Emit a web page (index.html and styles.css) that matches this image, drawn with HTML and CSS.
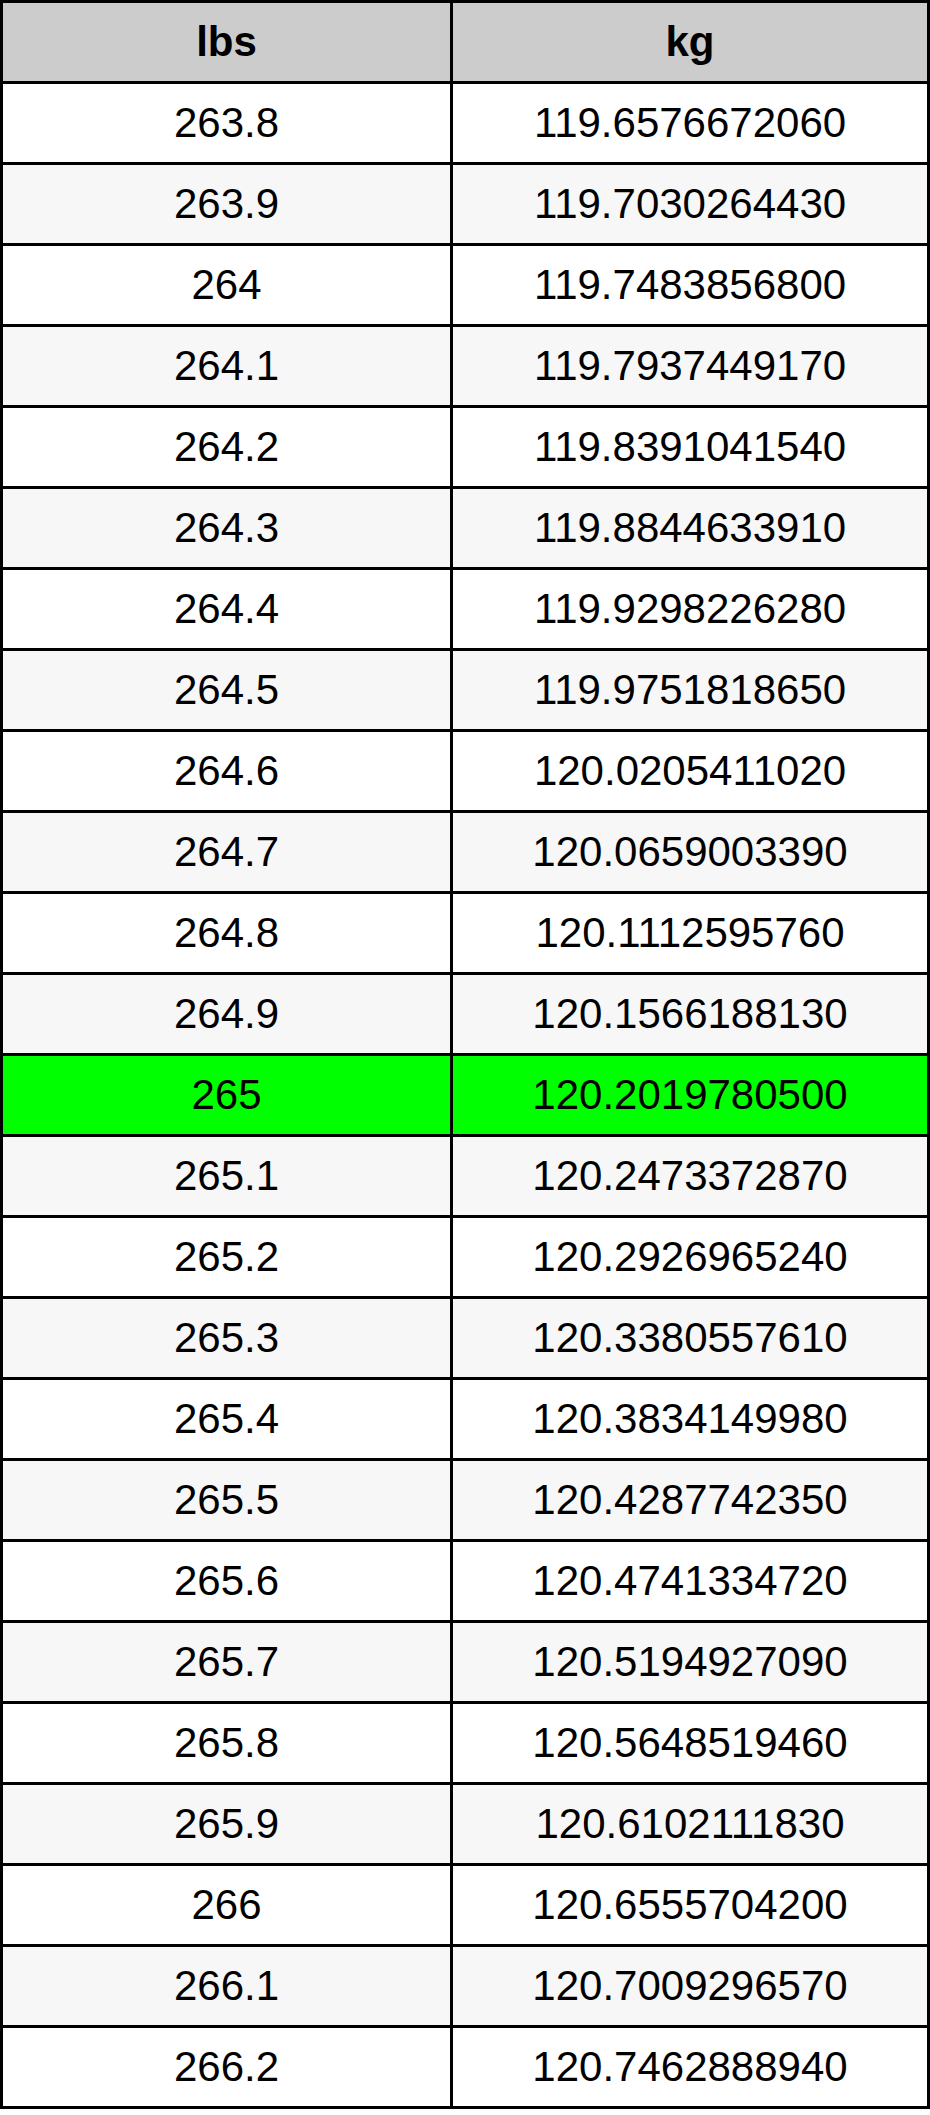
FILE: index.html
```html
<!DOCTYPE html>
<html>
<head>
<meta charset="utf-8">
<title>lbs to kg</title>
<link rel="stylesheet" href="styles.css">
</head>
<body>
<table class="conv">
<thead>
<tr><th class="c1">lbs</th><th class="c2">kg</th></tr>
</thead>
<tbody>
<tr><td>263.8</td><td>119.6576672060</td></tr>
<tr class="alt"><td>263.9</td><td>119.7030264430</td></tr>
<tr><td>264</td><td>119.7483856800</td></tr>
<tr class="alt"><td>264.1</td><td>119.7937449170</td></tr>
<tr><td>264.2</td><td>119.8391041540</td></tr>
<tr class="alt"><td>264.3</td><td>119.8844633910</td></tr>
<tr><td>264.4</td><td>119.9298226280</td></tr>
<tr class="alt"><td>264.5</td><td>119.9751818650</td></tr>
<tr><td>264.6</td><td>120.0205411020</td></tr>
<tr class="alt"><td>264.7</td><td>120.0659003390</td></tr>
<tr><td>264.8</td><td>120.1112595760</td></tr>
<tr class="alt"><td>264.9</td><td>120.1566188130</td></tr>
<tr class="hl"><td>265</td><td>120.2019780500</td></tr>
<tr class="alt"><td>265.1</td><td>120.2473372870</td></tr>
<tr><td>265.2</td><td>120.2926965240</td></tr>
<tr class="alt"><td>265.3</td><td>120.3380557610</td></tr>
<tr><td>265.4</td><td>120.3834149980</td></tr>
<tr class="alt"><td>265.5</td><td>120.4287742350</td></tr>
<tr><td>265.6</td><td>120.4741334720</td></tr>
<tr class="alt"><td>265.7</td><td>120.5194927090</td></tr>
<tr><td>265.8</td><td>120.5648519460</td></tr>
<tr class="alt"><td>265.9</td><td>120.6102111830</td></tr>
<tr><td>266</td><td>120.6555704200</td></tr>
<tr class="alt"><td>266.1</td><td>120.7009296570</td></tr>
<tr><td>266.2</td><td>120.7462888940</td></tr>
</tbody>
</table>
</body>
</html>
```

FILE: styles.css
```css
html, body {
  margin: 0;
  padding: 0;
  background: #ffffff;
}

.conv {
  border-collapse: separate;
  border-spacing: 0;
  table-layout: fixed;
  width: 930px;
  border-top: 3px solid #000;
  border-left: 3px solid #000;
  font-family: "Liberation Sans", Arial, sans-serif;
  font-size: 42px;
  color: #000;
}

.conv th,
.conv td {
  box-sizing: border-box;
  padding: 0;
  line-height: 78px;
  text-align: center;
  border-right: 3px solid #000;
  border-bottom: 3px solid #000;
  white-space: nowrap;
}

.conv th {
  background: #cccccc;
  font-weight: bold;
}

.conv .c1 {
  width: 450px;
}

.conv .c2 {
  width: 477px;
}

.conv td {
  background: #ffffff;
  font-weight: normal;
}

.conv tr.alt td {
  background: #f7f7f7;
}

.conv tr.hl td {
  background: #00ff00;
}
```
